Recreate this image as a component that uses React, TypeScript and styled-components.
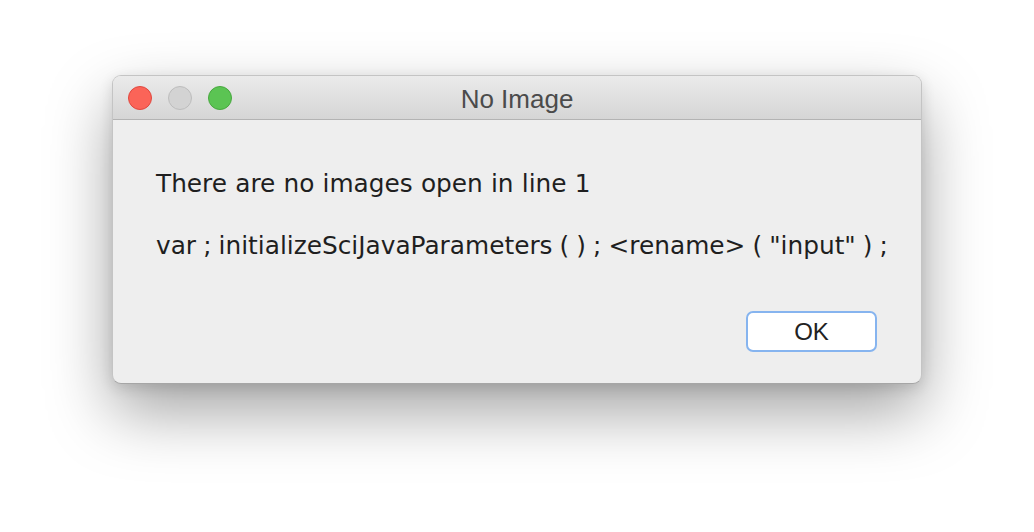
import React from "react"
import styled, { createGlobalStyle } from "styled-components"

const GlobalStyle = createGlobalStyle`
  html, body {
    margin: 0;
    padding: 0;
    background: #ffffff;
    width: 100%;
    height: 100%;
    overflow: hidden;
  }
`

const StyledPage = styled.div`
  display: flex;
  justify-content: center;
  align-items: flex-start;
  width: 1034px;
  height: 532px;
  padding-top: 75px;
  box-sizing: border-box;
`

const StyledWindow = styled.div`
  display: flex;
  flex-direction: column;
  width: 810px;
  height: 309px;
  box-sizing: border-box;
  background: #eeeeee;
  border-radius: 9px;
  border: 1px solid #c4c4c4;
  border-bottom-color: #a6a6a6;
  box-shadow: 0 28px 64px rgba(0, 0, 0, 0.36), 0 4px 14px rgba(0, 0, 0, 0.12);
  overflow: hidden;
`

const StyledTitleBar = styled.div`
  display: grid;
  grid-template-columns: 1fr auto 1fr;
  align-items: center;
  height: 43px;
  flex-shrink: 0;
  padding: 0 15px;
  background: linear-gradient(#ebebeb, #d5d5d5);
  border-bottom: 1px solid #b3b3b3;
  box-sizing: content-box;
`

const StyledLights = styled.div`
  display: flex;
  gap: 16px;
`

const StyledLight = styled.span<{ fill: string; edge: string }>`
  width: 24px;
  height: 24px;
  border-radius: 50%;
  box-sizing: border-box;
  background: ${({ fill }) => fill};
  border: 1px solid ${({ edge }) => edge};
`

const StyledTitle = styled.span`
  font-family: "Liberation Sans", Arial, sans-serif;
  font-size: 26px;
  color: #4b4b4b;
  line-height: 1;
  margin-top: 3px;
`

const StyledBody = styled.div`
  display: flex;
  flex-direction: column;
  flex: 1;
  padding: 49px 44px 0 43px;
`

const StyledMessage = styled.p<{ spacing?: number }>`
  margin: 0 0 33px;
  font-family: "DejaVu Sans", Verdana, sans-serif;
  font-size: 24.8px;
  line-height: 29px;
  color: #1f1f1f;
  white-space: nowrap;
  word-spacing: ${({ spacing }) => spacing ?? 0}px;
`

const StyledButtonRow = styled.div`
  display: flex;
  justify-content: flex-end;
  margin-top: 18px;
`

const StyledButton = styled.button`
  width: 131px;
  height: 41px;
  border-radius: 7px;
  border: 2px solid #86b4ef;
  background: #ffffff;
  font-family: "Liberation Sans", Arial, sans-serif;
  font-size: 24px;
  color: #222222;
  padding: 0;
  padding-top: 1px;
  cursor: default;
`

export default function App() {
  return (
    <>
      <GlobalStyle />
      <StyledPage>
        <StyledWindow>
          <StyledTitleBar>
            <StyledLights>
              <StyledLight fill="#fb6458" edge="#e0483f" />
              <StyledLight fill="#d3d3d3" edge="#bdbdbd" />
              <StyledLight fill="#5bc453" edge="#48a83f" />
            </StyledLights>
            <StyledTitle>No Image</StyledTitle>
            <span />
          </StyledTitleBar>
          <StyledBody>
            <StyledMessage spacing={0.3}>There are no images open in line 1</StyledMessage>
            <StyledMessage spacing={-0.8}>
              var ; initializeSciJavaParameters ( ) ; &lt;rename&gt; ( "input" ) ;
            </StyledMessage>
            <StyledButtonRow>
              <StyledButton>OK</StyledButton>
            </StyledButtonRow>
          </StyledBody>
        </StyledWindow>
      </StyledPage>
    </>
  )
}
